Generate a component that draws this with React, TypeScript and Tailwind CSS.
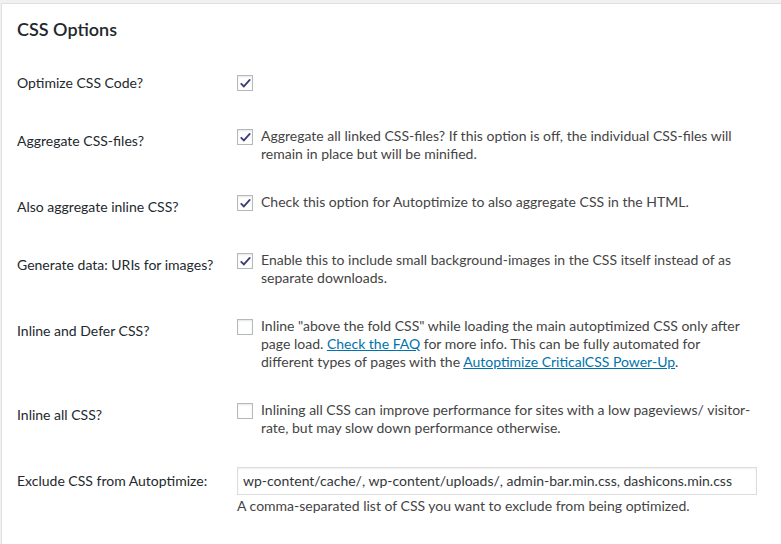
import React from 'react';

const font = { fontFamily: 'Lato, "Noto Sans", Arial, sans-serif' };

type Row = {
  label: string;
  checked: boolean;
  lines?: React.ReactNode[];
};

const Check: React.FC<{ checked: boolean }> = ({ checked }) => (
  <span className="inline-flex items-center justify-center w-4 h-4 shrink-0 bg-white border border-[#b4b9be] shadow-[inset_0_1px_2px_rgba(0,0,0,0.1)]">
    {checked && (
      <svg width="13" height="13" viewBox="0 0 20 20">
        <path d="M3.5 10.5 L7.5 14.5 L16.5 4.5" fill="none" stroke="#3a3f73" strokeWidth="2.8" strokeLinecap="round" />
      </svg>
    )}
  </span>
);

const A: React.FC<{ children: React.ReactNode }> = ({ children }) => (
  <a href="#" className="text-[#0073aa] underline">{children}</a>
);

const rows: Row[] = [
  { label: 'Optimize CSS Code?', checked: true },
  {
    label: 'Aggregate CSS-files?',
    checked: true,
    lines: [
      'Aggregate all linked CSS-files? If this option is off, the individual CSS-files will',
      'remain in place but will be minified.',
    ],
  },
  {
    label: 'Also aggregate inline CSS?',
    checked: true,
    lines: ['Check this option for Autoptimize to also aggregate CSS in the HTML.'],
  },
  {
    label: 'Generate data: URIs for images?',
    checked: true,
    lines: [
      'Enable this to include small background-images in the CSS itself instead of as',
      'separate downloads.',
    ],
  },
  {
    label: 'Inline and Defer CSS?',
    checked: false,
    lines: [
      'Inline "above the fold CSS" while loading the main autoptimized CSS only after',
      <>page load. <A>Check the FAQ</A> for more info. This can be fully automated for</>,
      <>different types of pages with the <A>Autoptimize CriticalCSS Power-Up</A>.</>,
    ],
  },
  {
    label: 'Inline all CSS?',
    checked: false,
    lines: [
      'Inlining all CSS can improve performance for sites with a low pageviews/ visitor-',
      'rate, but may slow down performance otherwise.',
    ],
  },
];

export default function App() {
  return (
    <div className="min-h-screen bg-[#f1f1f1] pt-[3px] pl-[1px] overflow-hidden" style={font}>
      <div className="bg-white border-l border-t border-[#e0e0e0] pl-[15px] min-h-[541px] text-[14px]">
        <h2 className="pt-[13px] text-[18px] leading-[24px] font-semibold text-[#23282d]">CSS Options</h2>
        <div className="mt-[13px]">
          {rows.map((r) => (
            <div key={r.label} className="flex">
              <div className="w-[220px] shrink-0 py-5 leading-[18px] text-[#23282d] whitespace-nowrap">{r.label}</div>
              <div className={`flex-1 py-[15px] leading-[18px] text-[#444] ${r.lines ? '' : 'flex items-center'}`}>
                {r.lines ? (
                  <div className="flex gap-2">
                    <div className="mt-[2px]">
                      <Check checked={r.checked} />
                    </div>
                    <div>
                      {r.lines.map((l, i) => (
                        <div key={i} className="whitespace-nowrap">{l}</div>
                      ))}
                    </div>
                  </div>
                ) : (
                  <Check checked={r.checked} />
                )}
              </div>
            </div>
          ))}
          <div className="flex">
            <div className="w-[220px] shrink-0 py-5 leading-[18px] text-[#23282d] whitespace-nowrap">
              Exclude CSS from Autoptimize:
            </div>
            <div className="flex-1 py-[15px] leading-[18px] text-[#444]">
              <div className="w-[520px] h-[28px] border border-[#ddd] shadow-[inset_0_1px_2px_rgba(0,0,0,0.07)] px-[5px] flex items-center text-[#32373c] whitespace-nowrap">
                wp-content/cache/, wp-content/uploads/, admin-bar.min.css, dashicons.min.css
              </div>
              <div className="mt-[2px] whitespace-nowrap">A comma-separated list of CSS you want to exclude from being optimized.</div>
            </div>
          </div>
        </div>
      </div>
    </div>
  );
}
